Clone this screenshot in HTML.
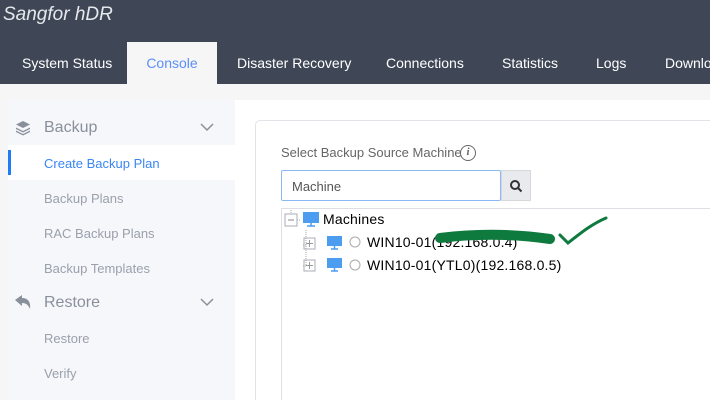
<!DOCTYPE html>
<html style="width:710px;height:400px;overflow:hidden"><head><meta charset="utf-8"><style>
*{margin:0;padding:0;box-sizing:border-box}
body{width:710px;height:400px;overflow:hidden;background:#f6f6f6;font-family:"Liberation Sans",sans-serif;position:relative}
.hd{position:absolute;left:0;top:0;width:710px;height:84px;background:#3f4756}
.logo{position:absolute;left:3px;top:4px;color:#e6e8ec;font-style:italic;font-size:19px}
.tab{position:absolute;top:55px;color:#fff;font-size:14px}
.tab.on{background:#f6f6f6;color:#5b8ff9;top:42px;height:42px;padding-top:13px;text-align:center}
.side{position:absolute;left:8px;top:100px;width:227px;height:300px;background:#f5f7fb}
.it{position:absolute;left:44px;font-size:13px;color:#9aa0ab}
.grp{position:absolute;left:44px;font-size:16px;color:#8a909b}
.main{position:absolute;left:235px;top:100px;width:475px;height:300px;background:#fff}
.panel{position:absolute;left:255px;top:120px;width:470px;height:290px;border:1px solid #e1e3e8;border-radius:5px}
.tr{position:absolute;font-size:14px;color:#000;letter-spacing:0.2px}
</style></head><body>
<div class="hd"><div class="logo">Sangfor hDR</div>
<div class="tab" style="left:22px">System Status</div>
<div class="tab on" style="left:127px;width:90px">Console</div>
<div class="tab" style="left:237px">Disaster Recovery</div>
<div class="tab" style="left:386px">Connections</div>
<div class="tab" style="left:502px">Statistics</div>
<div class="tab" style="left:596px">Logs</div>
<div class="tab" style="left:665px">Downloads</div>
</div>
<div class="side">
<div style="position:absolute;left:0;top:45px;width:227px;height:35px;background:#fff"></div>
<div style="position:absolute;left:0;top:50px;width:3px;height:25px;background:#1e7cf5"></div>
</div>
<svg style="position:absolute;left:15px;top:120px" width="16" height="16" viewBox="0 0 16 16" fill="#8a909b"><path d="M8 1L15 4.5 8 8 1 4.5Z"/><path d="M1 7.5L8 11 15 7.5 15 9 8 12.5 1 9Z"/><path d="M1 10.5L8 14 15 10.5 15 12 8 15.5 1 12Z"/></svg>
<div class="grp" style="top:119px">Backup</div>
<svg style="position:absolute;left:199px;top:122px" width="16" height="10"><path d="M2 2L8 8 14 2" stroke="#8a909b" stroke-width="1.5" fill="none"/></svg>
<div class="it" style="top:156px;color:#3a86f5">Create Backup Plan</div>
<div class="it" style="top:191px">Backup Plans</div>
<div class="it" style="top:226px">RAC Backup Plans</div>
<div class="it" style="top:261px">Backup Templates</div>
<svg style="position:absolute;left:14px;top:294px" width="18" height="16" viewBox="0 0 18 16"><path d="M1 6L8 1V4C14 4 17 8 16 15 14 10 11 9 8 9V12Z" fill="#8a909b"/></svg>
<div class="grp" style="top:294px">Restore</div>
<svg style="position:absolute;left:199px;top:297px" width="16" height="10"><path d="M2 2L8 8 14 2" stroke="#8a909b" stroke-width="1.5" fill="none"/></svg>
<div class="it" style="top:331px">Restore</div>
<div class="it" style="top:366px">Verify</div>
<div class="main"></div>
<div class="panel"></div>
<div style="position:absolute;left:281px;top:145px;font-size:13px;color:#666">Select Backup Source Machine</div>
<div style="position:absolute;left:460px;top:145px;width:16px;height:16px;border:1.5px solid #666;border-radius:50%;font:italic bold 11px 'Liberation Serif',serif;color:#666;text-align:center;line-height:13px">i</div>
<div style="position:absolute;left:281px;top:170px;width:220px;height:31px;border:1.5px solid #8ab8f5;border-radius:2px;font-size:13px;color:#555;padding:8px 10px">Machine</div>
<div style="position:absolute;left:501px;top:170px;width:30px;height:31px;background:#e8eaed;border:1px solid #d6d8dc"></div>
<svg style="position:absolute;left:509px;top:179px" width="14" height="14"><circle cx="6" cy="6" r="4" stroke="#333" stroke-width="2" fill="none"/><path d="M9 9L12.5 12.5" stroke="#333" stroke-width="2"/></svg>
<div style="position:absolute;left:281px;top:208px;width:440px;height:200px;border:1px solid #dcdfe4"></div>
<svg style="position:absolute;left:283px;top:210px" width="90" height="70" fill="none">
<rect x="2" y="4" width="12" height="12" stroke="#a8acb8"/><path d="M5 10H11" stroke="#888"/><path d="M8 0V4M14 10H18M23 20V56M23 35H20M23 56H20" stroke="#aaa" stroke-dasharray="1 1"/>
<rect x="20" y="2" width="16" height="11" fill="#4c9cf0"/><path d="M28 13V16M24 16H32" stroke="#4c9cf0" stroke-width="1.5"/>
<rect x="21" y="28" width="11" height="11" stroke="#a8acb8"/><path d="M23 33.5H30M26.5 30V37" stroke="#999"/>
<rect x="44" y="26" width="15" height="10" fill="#4c9cf0"/><path d="M51.5 36V39M48 39H55" stroke="#4c9cf0" stroke-width="1.5"/><circle cx="72" cy="32" r="5" stroke="#aaa"/>
<rect x="21" y="50" width="11" height="11" stroke="#a8acb8"/><path d="M23 55.5H30M26.5 52V59" stroke="#999"/>
<rect x="44" y="48" width="15" height="10" fill="#4c9cf0"/><path d="M51.5 58V61M48 61H55" stroke="#4c9cf0" stroke-width="1.5"/><circle cx="72" cy="55" r="5" stroke="#aaa"/>
</svg>
<div class="tr" style="left:323px;top:211px">Machines</div>
<div class="tr" style="left:367px;top:234px">WIN10-01(192.168.0.4)</div>
<div class="tr" style="left:367px;top:257px">WIN10-01(YTL0)(192.168.0.5)</div>
<svg style="position:absolute;left:420px;top:210px" width="200" height="40" fill="none"><path d="M20 28C50 24 90 23 130 29" stroke="#0e7a3e" stroke-width="10" stroke-linecap="round"/><path d="M140 25L148 33C162 22 172 14 186 8" stroke="#0e7a3e" stroke-width="3" stroke-linecap="round"/></svg>
</body></html>
